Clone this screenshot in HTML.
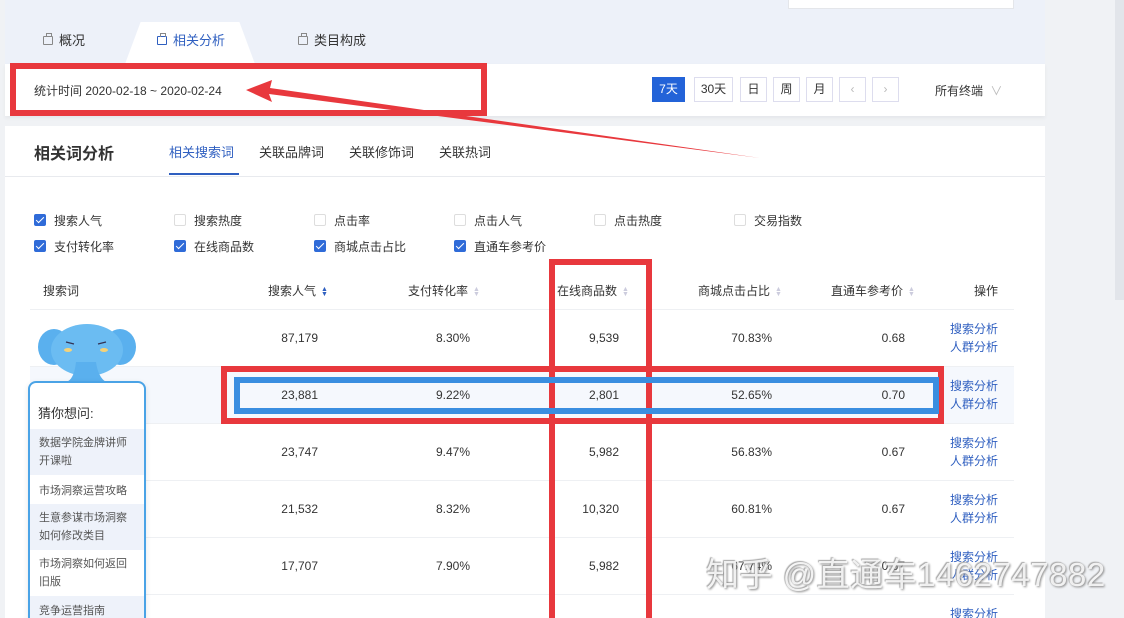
<!DOCTYPE html>
<html style="width:1124px;height:618px;overflow:hidden"><head><meta charset="utf-8"><style>
*{margin:0;padding:0;box-sizing:border-box}
body{width:1124px;height:618px;overflow:hidden;background:#f0f2f5;font-family:"Liberation Sans","Noto Sans CJK SC",sans-serif;font-size:12px;color:#333;position:relative}
.a{position:absolute}
.top{left:5px;top:0;width:1040px;height:64px;background:#edf1f9}
.tab{top:30px;font-size:13px;color:#333}
.bag{display:inline-block;width:10px;height:9px;border:1.3px solid #888;border-radius:1px;margin-right:6px;position:relative;top:0}
.bag:before{content:"";position:absolute;left:2px;top:-4px;width:4px;height:3px;border:1.3px solid #888;border-bottom:none}
.card{background:#fff;left:5px;width:1040px}
.btn{top:77px;height:25px;border:1px solid #dde;background:#fff;text-align:center;line-height:23px;font-size:12px;color:#333}
.cb{width:12px;height:12px;border:1px solid #ddd;border-radius:2px;background:#fff}
.cb.on{background:#2f6bd8;border-color:#2f6bd8}
.cb.on:after{content:"";position:absolute;left:3px;top:0px;width:3px;height:7px;border:solid #fff;border-width:0 1.5px 1.5px 0;transform:rotate(45deg)}
.cl{font-size:12px;color:#333}
.th{top:282px;font-size:12px;color:#333}
.n{font-size:12px;color:#333;text-align:right;width:100px}
.lk{color:#2f5fc0;font-size:12px;line-height:18px}
.sort{display:inline-block;width:6px;margin-left:5px;vertical-align:middle;font-size:7px;line-height:5px;color:#ccd}
.line{left:30px;width:984px;height:1px;background:#eef0f3}
.red{border:6px solid #e8383d}
</style></head><body>
<div class="a top"></div>
<div class="a" style="left:788px;top:0;width:226px;height:9px;background:#fff;border:1px solid #e4e6ea;border-top:none"></div>
<div class="a" style="left:125px;top:22px;width:130px;height:42px;background:#fff;clip-path:polygon(12% 0,88% 0,100% 100%,0 100%);border-radius:6px 6px 0 0"></div>
<div class="a tab" style="left:43px"><span class="bag"></span>概况</div>
<div class="a tab" style="left:157px;color:#2f5fc0"><span class="bag" style="border-color:#2f5fc0"></span>相关分析</div>
<div class="a tab" style="left:298px"><span class="bag"></span>类目构成</div>
<div class="a card" style="top:64px;height:52px;box-shadow:0 2px 4px rgba(0,0,0,.05)"></div>
<div class="a" style="left:34px;top:82px;font-size:12px">统计时间 2020-02-18 ~ 2020-02-24</div>
<div class="a btn" style="left:652px;width:33px;background:#2363d8;border-color:#2363d8;color:#fff">7天</div>
<div class="a btn" style="left:694px;width:39px">30天</div>
<div class="a btn" style="left:740px;width:27px">日</div>
<div class="a btn" style="left:773px;width:27px">周</div>
<div class="a btn" style="left:806px;width:27px">月</div>
<div class="a btn" style="left:839px;width:27px;color:#bbb">‹</div>
<div class="a btn" style="left:872px;width:27px;color:#bbb">›</div>
<div class="a" style="left:935px;top:82px">所有终端 <span style="color:#bbb;margin-left:4px">∨</span></div>
<div class="a card" style="top:126px;height:492px"></div>
<div class="a" style="left:34px;top:140px;font-size:16px;font-weight:bold;color:#333">相关词分析</div>
<div class="a" style="left:169px;top:142px;font-size:13px;color:#2f5fc0">相关搜索词</div>
<div class="a" style="left:169px;top:173px;width:70px;height:2px;background:#2f5fc0"></div>
<div class="a" style="left:259px;top:142px;font-size:13px">关联品牌词</div>
<div class="a" style="left:349px;top:142px;font-size:13px">关联修饰词</div>
<div class="a" style="left:439px;top:142px;font-size:13px">关联热词</div>
<div class="a" style="left:5px;top:176px;width:1040px;height:1px;background:#e8eaee"></div>
<div class="a cb on" style="left:34px;top:214px"></div><div class="a cl" style="left:54px;top:212px">搜索人气</div>
<div class="a cb" style="left:174px;top:214px"></div><div class="a cl" style="left:194px;top:212px">搜索热度</div>
<div class="a cb" style="left:314px;top:214px"></div><div class="a cl" style="left:334px;top:212px">点击率</div>
<div class="a cb" style="left:454px;top:214px"></div><div class="a cl" style="left:474px;top:212px">点击人气</div>
<div class="a cb" style="left:594px;top:214px"></div><div class="a cl" style="left:614px;top:212px">点击热度</div>
<div class="a cb" style="left:734px;top:214px"></div><div class="a cl" style="left:754px;top:212px">交易指数</div>
<div class="a cb on" style="left:34px;top:240px"></div><div class="a cl" style="left:54px;top:238px">支付转化率</div>
<div class="a cb on" style="left:174px;top:240px"></div><div class="a cl" style="left:194px;top:238px">在线商品数</div>
<div class="a cb on" style="left:314px;top:240px"></div><div class="a cl" style="left:334px;top:238px">商城点击占比</div>
<div class="a cb on" style="left:454px;top:240px"></div><div class="a cl" style="left:474px;top:238px">直通车参考价</div>
<div class="a th" style="left:43px">搜索词</div>
<div class="a th" style="left:268px">搜索人气<span class="sort" style="color:#2f5fc0">▲<br>▼</span></div>
<div class="a th" style="left:408px">支付转化率<span class="sort">▲<br>▼</span></div>
<div class="a th" style="left:557px">在线商品数<span class="sort">▲<br>▼</span></div>
<div class="a th" style="left:698px">商城点击占比<span class="sort">▲<br>▼</span></div>
<div class="a th" style="left:831px">直通车参考价<span class="sort">▲<br>▼</span></div>
<div class="a th" style="left:974px">操作</div>
<div class="a line" style="top:309px"></div>
<div class="a" style="left:30px;top:367px;width:984px;height:56px;background:#f5f8fd"></div>
<div class="a line" style="top:366px"></div><div class="a line" style="top:423px"></div><div class="a line" style="top:480px"></div><div class="a line" style="top:537px"></div><div class="a line" style="top:594px"></div>
<div class="a n" style="left:218px;top:331px">87,179</div><div class="a n" style="left:370px;top:331px">8.30%</div><div class="a n" style="left:519px;top:331px">9,539</div><div class="a n" style="left:672px;top:331px">70.83%</div><div class="a n" style="left:805px;top:331px">0.68</div>
<div class="a n" style="left:218px;top:388px">23,881</div><div class="a n" style="left:370px;top:388px">9.22%</div><div class="a n" style="left:519px;top:388px">2,801</div><div class="a n" style="left:672px;top:388px">52.65%</div><div class="a n" style="left:805px;top:388px">0.70</div>
<div class="a n" style="left:218px;top:445px">23,747</div><div class="a n" style="left:370px;top:445px">9.47%</div><div class="a n" style="left:519px;top:445px">5,982</div><div class="a n" style="left:672px;top:445px">56.83%</div><div class="a n" style="left:805px;top:445px">0.67</div>
<div class="a n" style="left:218px;top:502px">21,532</div><div class="a n" style="left:370px;top:502px">8.32%</div><div class="a n" style="left:519px;top:502px">10,320</div><div class="a n" style="left:672px;top:502px">60.81%</div><div class="a n" style="left:805px;top:502px">0.67</div>
<div class="a n" style="left:218px;top:559px">17,707</div><div class="a n" style="left:370px;top:559px">7.90%</div><div class="a n" style="left:519px;top:559px">5,982</div><div class="a n" style="left:672px;top:559px">67.74%</div><div class="a n" style="left:805px;top:559px">0.67</div>
<div class="a lk" style="left:950px;top:320px">搜索分析<br>人群分析</div>
<div class="a lk" style="left:950px;top:377px">搜索分析<br>人群分析</div>
<div class="a lk" style="left:950px;top:434px">搜索分析<br>人群分析</div>
<div class="a lk" style="left:950px;top:491px">搜索分析<br>人群分析</div>
<div class="a lk" style="left:950px;top:548px">搜索分析<br>人群分析</div>
<div class="a lk" style="left:950px;top:605px">搜索分析</div>
<div class="a" style="left:1115px;top:0;width:9px;height:300px;background:#e2e5ea"></div>
<div class="a red" style="left:10px;top:63px;width:477px;height:53px"></div>
<div class="a red" style="left:549px;top:259px;width:103px;height:370px"></div>
<div class="a red" style="left:221px;top:366px;width:723px;height:58px"></div>
<div class="a" style="left:234px;top:377px;width:705px;height:37px;border:6px solid #3a8ee0"></div>
<svg class="a" style="left:0;top:0" width="1124" height="618"><polygon points="246,90 272,80 270,88 760,158 269,94 272,102" fill="#e8383d"/></svg>
<svg class="a" style="left:36px;top:322px" width="102" height="62"><ellipse cx="18" cy="25" rx="16" ry="18" fill="#5ab0ee"/><ellipse cx="84" cy="25" rx="16" ry="18" fill="#5ab0ee"/><ellipse cx="51" cy="28" rx="36" ry="26" fill="#6bbcf2"/><path d="M40 40 Q38 58 30 60 L70 60 Q62 55 60 40Z" fill="#5ab0ee"/><ellipse cx="32" cy="28" rx="4" ry="2" fill="#f4d27a"/><ellipse cx="68" cy="28" rx="4" ry="2" fill="#f4d27a"/><path d="M30 20 L38 22 M62 22 L70 20" stroke="#335" stroke-width="1.3"/></svg>
<div class="a" style="left:28px;top:381px;width:118px;height:250px;background:#fff;border:2px solid #4aa3e6;border-radius:8px;box-shadow:0 2px 6px rgba(0,0,0,.1)"></div>
<div class="a" style="left:38px;top:403px;font-size:13px;color:#333">猜你想问:</div>
<div class="a" style="left:30px;top:429px;width:114px;height:46px;background:#eef2fa"></div>
<div class="a" style="left:39px;top:434px;font-size:11px;line-height:18px;color:#555;width:95px">数据学院金牌讲师开课啦</div>
<div class="a" style="left:39px;top:482px;font-size:11px;color:#555">市场洞察运营攻略</div>
<div class="a" style="left:30px;top:504px;width:114px;height:46px;background:#eef2fa"></div>
<div class="a" style="left:39px;top:509px;font-size:11px;line-height:18px;color:#555;width:95px">生意参谋市场洞察如何修改类目</div>
<div class="a" style="left:39px;top:555px;font-size:11px;line-height:18px;color:#555;width:95px">市场洞察如何返回旧版</div>
<div class="a" style="left:30px;top:596px;width:114px;height:22px;background:#eef2fa"></div>
<div class="a" style="left:39px;top:602px;font-size:11px;color:#555">竞争运营指南</div>
<div class="a" style="left:706px;top:548px;font-size:33px;letter-spacing:0.5px;color:rgba(255,255,255,.85);text-shadow:1px 1px 2px #888,-1px -1px 1px #aaa;white-space:nowrap">知乎 @直通车1462747882</div>
</body></html>
